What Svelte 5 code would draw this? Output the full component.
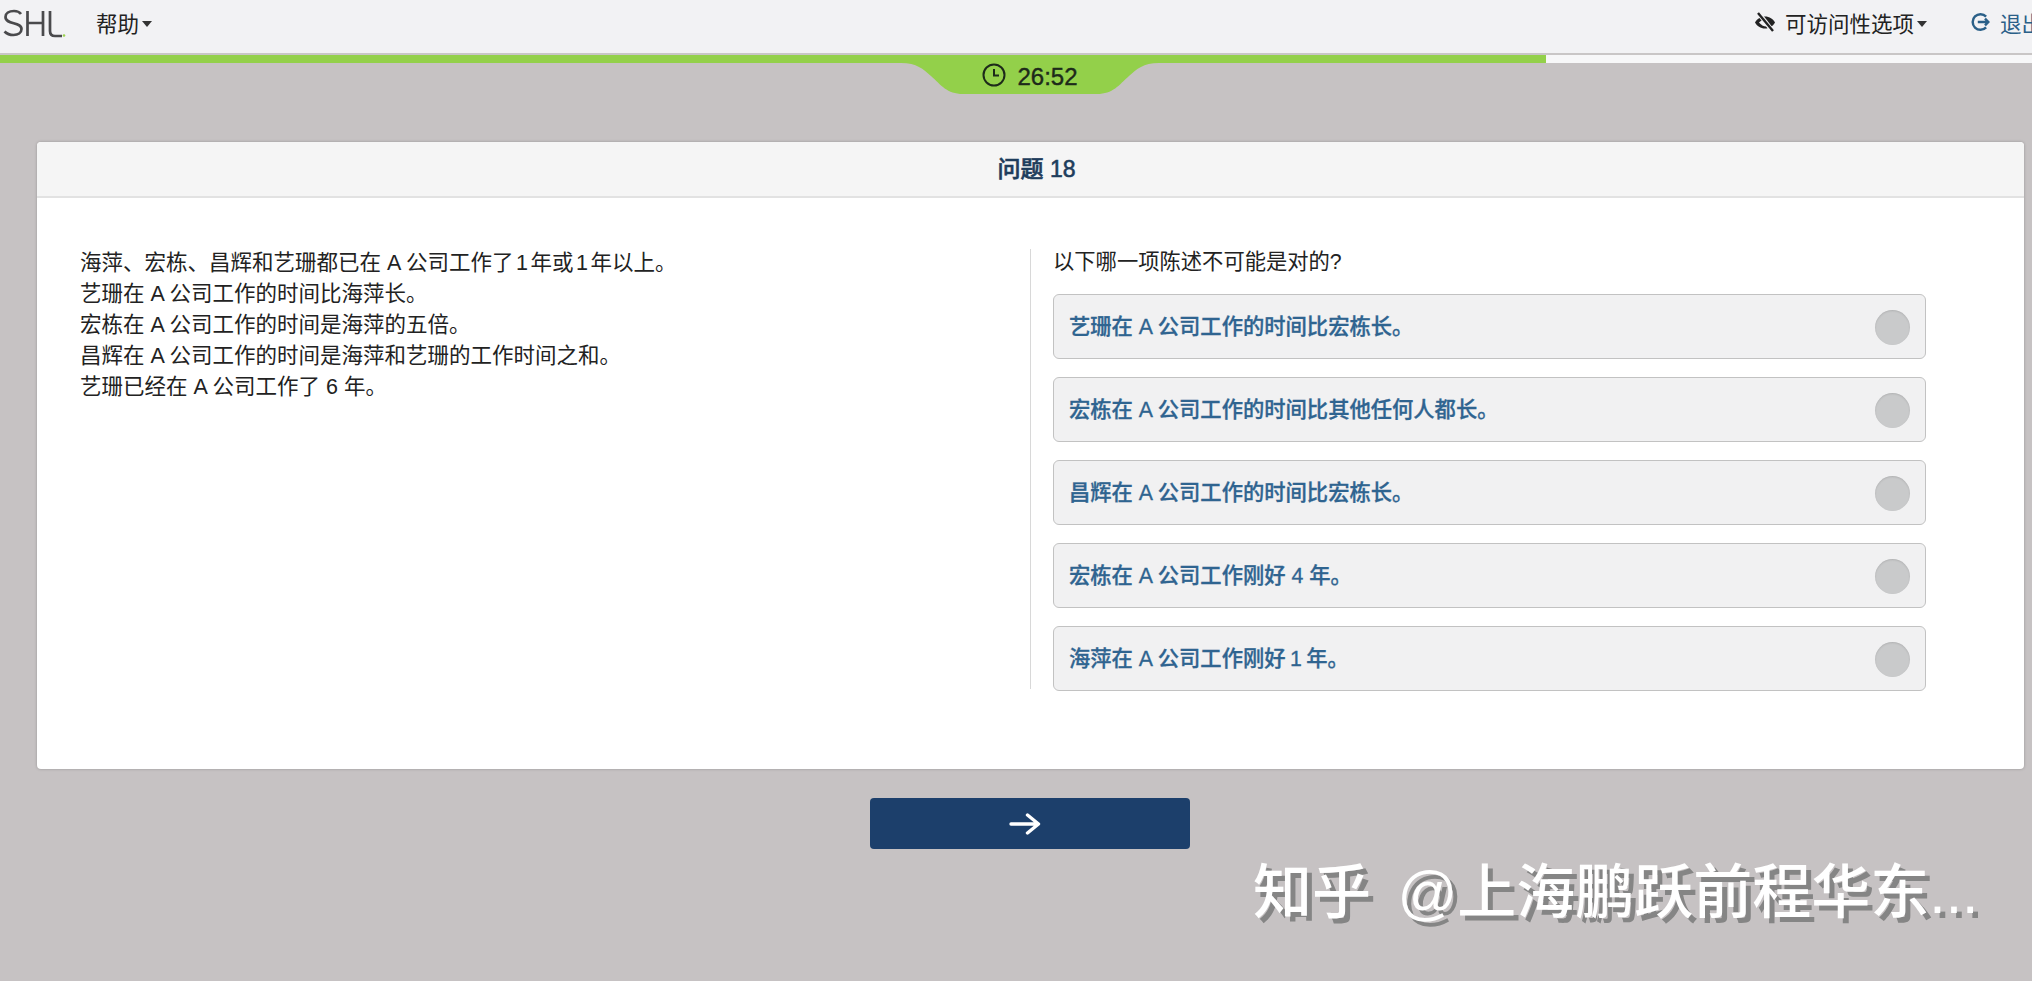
<script>
  const facts = [
    "海萍、宏栋、昌辉和艺珊都已在 A 公司工作了 1 年或 1 年以上。",
    "艺珊在 A 公司工作的时间比海萍长。",
    "宏栋在 A 公司工作的时间是海萍的五倍。",
    "昌辉在 A 公司工作的时间是海萍和艺珊的工作时间之和。",
    "艺珊已经在 A 公司工作了 6 年。"
  ];
  const options = [
    "艺珊在 A 公司工作的时间比宏栋长。",
    "宏栋在 A 公司工作的时间比其他任何人都长。",
    "昌辉在 A 公司工作的时间比宏栋长。",
    "宏栋在 A 公司工作刚好 4 年。",
    "海萍在 A 公司工作刚好 1 年。"
  ];
  // the "1" sits tighter than the other digits in the original font
  const parts = (line) => line.split(" 1 ");
</script>

<header class="topbar">
  <svg class="logo" width="66" height="40" viewBox="0 0 66 40" fill="none" stroke="#4a4a4c" stroke-width="2.7">
    <path d="M19 12c-1.500-2-4-3-7-3-5 0-8.500 2.500-8.500 6 0 8 16 4.500 16 12 0 4-3.500 6-8 6-3.500 0-6.500-1-9-3.500" />
    <path d="M25.500 9v25M41 9v25M25.500 21h15.500" />
    <path d="M48 9v20c0 3.500 1.500 5 5 5h7" />
    <circle cx="62" cy="33.500" r="1.300" fill="#9ad14b" stroke="none" />
  </svg>
  <span class="menu first">帮助<i class="caret"></i></span>
  <span class="spacer"></span>
  <svg class="eye" width="22" height="20" viewBox="0 0 22 20">
    <path fill="#222" d="M1 10.500C3 7 6.500 4.500 11 4.500s8 2.500 10 6c-2 3.500-5.500 6-10 6s-8-2.500-10-6z" />
    <path fill="#f2f2f4" d="M5 10.500c1.500-1.500 3-2.300 5-2.500l3.500 6.500c-3.300.5-6.300-1.500-8.500-4z" />
    <path fill="none" stroke="#f2f2f4" stroke-width="4.500" d="M3 -1 20 21" />
    <path fill="none" stroke="#222" stroke-width="2.400" d="M4 1 19 19" />
  </svg>
  <span class="menu access">可访问性选项<i class="caret"></i></span>
  <svg class="out" width="20" height="20" viewBox="0 0 18 18" fill="none" stroke="#2b6088" stroke-width="2.200">
    <path d="M14.500 4.200A7 7 0 1 0 14.500 13.800" />
    <path d="M7 9h9.500M13.500 6 16.500 9l-3 3" />
  </svg>
  <span class="logout">退出</span>
</header>

<div class="progress"><div class="fill"></div></div>

<div class="timer">
  <svg class="tab" width="274" height="40" viewBox="0 0 274 40">
    <path fill="#93d04a" d="M0 0H274V8H266C250 8 244 14 236 21C226 30 220 39 204 39H70C54 39 48 30 38 21C30 14 24 8 8 8H0Z" />
  </svg>
  <div class="clock">
    <svg width="24" height="24" viewBox="0 0 24 24" fill="none" stroke="#1d2a1a" stroke-width="2">
      <circle cx="12" cy="12" r="10.500" />
      <path d="M12 6v6.500h5" />
    </svg>
    <span class="time">26:52</span>
  </div>
</div>

<main class="page">
  <section class="card">
    <h1 class="card-title">问题 18</h1>
    <div class="card-body">
      <div class="facts">
        {#each facts as line}
          <p>{#each parts(line) as part, i}{#if i > 0}<span class="one">{" 1 "}</span>{/if}{part}{/each}</p>
        {/each}
      </div>
      <div class="answers">
        <p class="ask">以下哪一项陈述不可能是对的?</p>
        {#each options as opt}
          <div class="option">
            <span>{#each parts(opt) as part, i}{#if i > 0}<span class="one">{" 1 "}</span>{/if}{part}{/each}</span>
            <i class="radio"></i>
          </div>
        {/each}
      </div>
    </div>
  </section>

  <div class="next-row">
    <button class="next" aria-label="下一步">
      <svg width="32" height="24" viewBox="0 0 32 24" fill="none" stroke="#fff" stroke-width="3.400" stroke-linecap="round" stroke-linejoin="round">
        <path d="M2 12h27M18.500 3l11 9-11 9" />
      </svg>
    </button>
  </div>
</main>

<div class="watermark">知乎 @上海鹏跃前程华东...</div>

<style>
  :global(body) {
    margin: 0;
    background: #c6c2c3;
    font-family: "Liberation Sans", "Noto Sans CJK SC", sans-serif;
    color: #222;
    overflow: hidden;
  }

  .topbar {
    height: 44px;
    padding-bottom: 9px;
    background: #f2f2f4;
    border-bottom: 2px solid #c9c6c6;
    display: flex;
    align-items: center;
    font-size: 21.5px;
  }

  .logo {
    margin-left: 2px;
    flex: none;
  }

  .menu {
    display: flex;
    align-items: center;
  }

  .first {
    margin-left: 28px;
  }

  .caret {
    display: inline-block;
    border-top: 6px solid #333;
    border-left: 5.5px solid transparent;
    border-right: 5.5px solid transparent;
    margin-left: 3px;
    margin-top: 3px;
  }

  .spacer {
    flex: 1;
  }

  .eye {
    margin-right: 9px;
  }

  .access {
    margin-right: 43px;
  }

  .out {
    margin-right: 10px;
  }

  .logout {
    color: #2b6088;
    width: 32px;
    white-space: nowrap;
    overflow: hidden;
  }

  .progress {
    height: 8px;
    background: #f7f7f8;
  }

  .fill {
    width: 1546px;
    height: 100%;
    background: #93d04a;
  }

  .timer {
    position: absolute;
    left: 893px;
    top: 55px;
    width: 274px;
    height: 40px;
  }

  .tab {
    display: block;
  }

  .clock {
    position: absolute;
    inset: 0 0 0 0;
    display: flex;
    justify-content: center;
    align-items: center;
    gap: 11px;
    font-size: 24px;
    color: #1d2a1a;
    -webkit-text-stroke: 0.4px #1d2a1a;
  }

  .time {
    position: relative;
    top: 2px;
  }

  .page {
    padding: 79px 8px 0 37px;
  }

  .card {
    background: #fff;
    border-radius: 4px;
    box-shadow: 0 0 3px rgba(0, 0, 0, 0.25);
    height: 627px;
  }

  .card-title {
    margin: 0;
    height: 56px;
    line-height: 54px;
    box-sizing: border-box;
    padding-left: 12px;
    text-align: center;
    font-size: 23px;
    font-weight: 500;
    -webkit-text-stroke: 0.6px #1e3d5c;
    color: #1e3d5c;
    background: #f5f5f5;
    border-bottom: 2px solid #e2e2e2;
    border-radius: 4px 4px 0 0;
  }

  .card-body {
    display: flex;
    padding: 50px 0 0 43px;
    font-size: 21.5px;
    line-height: 31px;
  }

  .facts {
    width: 950px;
    flex: none;
  }

  .facts p,
  .ask {
    margin: 0;
  }

  .one {
    word-spacing: -3.5px;
  }

  .answers {
    width: 873px;
    margin-top: 1px;
    border-left: 1px solid #d8d8d8;
    padding-left: 22px;
    height: 440px;
    font-size: 21.3px;
  }

  .ask {
    height: 45px;
    line-height: 26px;
  }

  .option {
    height: 65px;
    box-sizing: border-box;
    margin-bottom: 18px;
    background: #f1f1f2;
    border: 1px solid #c2c2c2;
    border-radius: 6px;
    display: flex;
    align-items: center;
    justify-content: space-between;
    padding: 1px 15px 0;
    color: #2f6490;
    font-weight: 500;
    -webkit-text-stroke: 0.3px #2f6490;
  }

  .option:last-child {
    margin-bottom: 0;
  }

  .option .one {
    word-spacing: -1.5px;
  }

  .radio {
    display: block;
    width: 35px;
    height: 35px;
    border-radius: 50%;
    background: #c9cacb;
    box-shadow: inset 0 1px 2px rgba(0, 0, 0, 0.12);
  }

  .next-row {
    padding: 29px 0 0 833px;
  }

  .next {
    display: flex;
    align-items: center;
    justify-content: center;
    width: 320px;
    height: 51px;
    background: #1c3f6b;
    border: none;
    border-radius: 4px;
    padding: 0 10px 0 0;
  }

  .watermark {
    position: absolute;
    left: 1253px;
    top: 858px;
    font-size: 59px;
    line-height: 70px;
    word-spacing: 10px;
    color: #fff;
    white-space: nowrap;
    font-weight: 500;
    text-shadow: 5px 5px 0 #858585;
  }
</style>
